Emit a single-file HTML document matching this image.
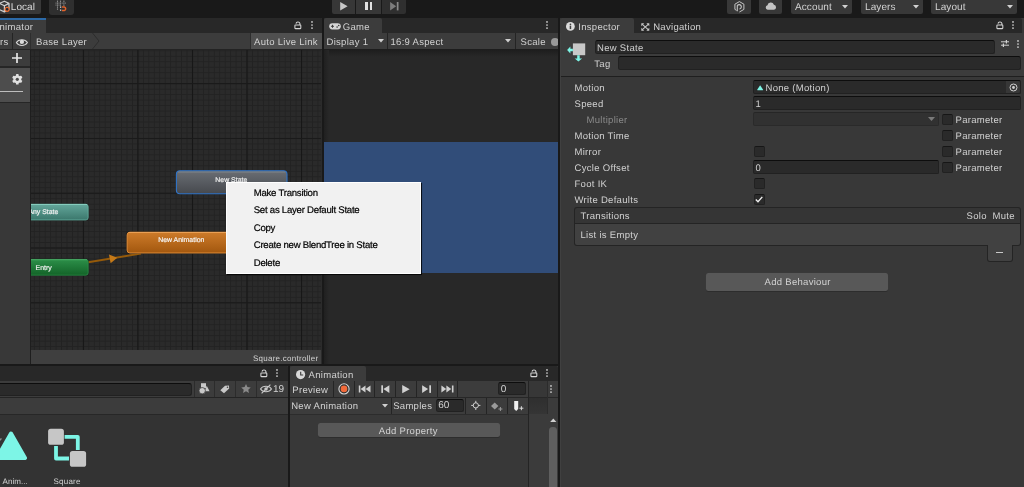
<!DOCTYPE html>
<html lang="en">
<head>
<meta charset="utf-8">
<title>Unity - Animator</title>
<style>
html,body{margin:0;padding:0;background:#191919;}
body{text-rendering:geometricPrecision;width:1024px;height:487px;overflow:hidden;position:relative;font-family:"Liberation Sans",sans-serif;font-size:10px;color:#d0d0d0;}
#root{position:absolute;left:0;top:0;width:1024px;height:487px;overflow:hidden;background:#191919;-webkit-font-smoothing:antialiased;will-change:transform;}

.a{position:absolute;}
.t{position:absolute;white-space:nowrap;line-height:12px;height:12px;font-size:9.5px;color:#d2d2d2;letter-spacing:0.3px;margin-top:1px;}
.tb{position:absolute;top:0;height:14px;background:#383838;border-radius:0 0 2px 2px;}
.tabrow{position:absolute;height:15px;background:#282828;border-radius:2px 2px 0 0;}
.tab{position:absolute;height:15px;background:#3c3c3c;border-radius:2px 2px 0 0;}
.bar{position:absolute;background:#3c3c3c;}
.sep{position:absolute;width:1px;background:#242424;}
.hsep{position:absolute;height:1px;background:#242424;}
.field{position:absolute;background:#2a2a2a;border:1px solid #212121;border-top-color:#0d0d0d;border-radius:2px;box-sizing:border-box;}
.chk{position:absolute;width:11px;height:11px;background:#2a2a2a;border:1px solid #212121;border-top-color:#161616;border-radius:2px;box-sizing:border-box;}
.btn{position:absolute;background:#585858;border-radius:2.5px;box-sizing:border-box;box-shadow:0 0.8px 0 #2a2a2a, 0 0 0 0.5px #3a3a3a;}
svg{position:absolute;overflow:visible;}
.mi{color:#000;font-size:9.6px;letter-spacing:-0.24px;margin-top:0;-webkit-text-stroke:0.2px #000;}
</style>
</head>
<body>
<div id="root">

<!-- ===== TOP TOOLBAR ===== -->
<div id="topbar" class="a" style="left:0;top:0;width:1024px;height:18px;background:#191919;">
  <div class="tb" style="left:0;width:41px;border-radius:0 0 2px 0;"></div>
  <svg style="left:0;top:0;" width="11" height="13" viewBox="0 0 11 13">
    <path d="M-0.5 3.4 L4.4 1.2 L9 3.4 L9 9.4 L4.4 11.9 L-0.5 9.6 M-0.5 3.4 L4.4 5.7 L9 3.4 M4.4 5.7 V11.9" fill="none" stroke="#cfcfcf" stroke-width="1.25" stroke-linejoin="round"/>
    <circle cx="7.1" cy="9.3" r="2" fill="#1f2a36" stroke="#ea6a2c" stroke-width="1.2"/>
  </svg>
  <div class="t" style="left:10.8px;top:1px;font-size:10px;letter-spacing:0.05px;color:#dcdcdc;">Local</div>
  <div class="tb" style="left:49px;width:24.5px;height:14.5px;background:#2f2f2f;border-radius:0 0 3px 3px;"></div>
  <svg style="left:55px;top:0;" width="14" height="12" viewBox="0 0 14 12">
    <rect x="1.95" y="0.65" width="1.1" height="1.1" fill="#a6a6a6"/><rect x="1.95" y="2.55" width="1.1" height="1.1" fill="#a6a6a6"/><rect x="1.95" y="4.55" width="1.1" height="1.1" fill="#a6a6a6"/><rect x="1.95" y="6.55" width="1.1" height="1.1" fill="#a6a6a6"/><rect x="1.95" y="8.55" width="1.1" height="1.1" fill="#a6a6a6"/><rect x="4.95" y="0.65" width="1.1" height="1.1" fill="#a6a6a6"/><rect x="4.95" y="2.55" width="1.1" height="1.1" fill="#a6a6a6"/><rect x="4.95" y="4.55" width="1.1" height="1.1" fill="#a6a6a6"/><rect x="8.35" y="0.65" width="1.1" height="1.1" fill="#a6a6a6"/><rect x="8.35" y="2.55" width="1.1" height="1.1" fill="#a6a6a6"/><rect x="8.35" y="4.55" width="1.1" height="1.1" fill="#a6a6a6"/><rect x="0.50" y="2.60" width="1" height="1" fill="#8e8e8e"/><rect x="3.50" y="2.60" width="1" height="1" fill="#8e8e8e"/><rect x="6.70" y="2.60" width="1" height="1" fill="#8e8e8e"/><rect x="9.90" y="2.60" width="1" height="1" fill="#8e8e8e"/><rect x="0.50" y="4.60" width="1" height="1" fill="#8e8e8e"/><rect x="3.50" y="4.60" width="1" height="1" fill="#8e8e8e"/>
    <path d="M5.6 6.6V7.8M5.6 9.4V10.8" stroke="#e0e0e0" stroke-width="1.3" fill="none"/>
    <path d="M7 7H9.4A1.9 1.9 0 0 1 9.4 10.6H7" stroke="#e0622a" stroke-width="1.5" fill="none"/>
  </svg>
  <div class="tb" style="left:331.5px;width:23.5px;border-radius:0 0 0 2px;background:#373737;"></div>
  <svg style="left:339.5px;top:2px;" width="8" height="9" viewBox="0 0 8 9"><path d="M0.2 0 L7.6 4.2 L0.2 8.4Z" fill="#c8c8c8"/></svg>
  <div class="tb" style="left:356px;width:25px;border-radius:0;background:#373737;"></div>
  <div class="a" style="left:365.4px;top:2px;width:2.4px;height:8.3px;background:#e2e2e2;"></div>
  <div class="a" style="left:370.1px;top:2px;width:2.4px;height:8.3px;background:#e2e2e2;"></div>
  <div class="tb" style="left:382px;width:24px;border-radius:0 0 2px 0;background:#2f2f2f;"></div>
  <svg style="left:390px;top:2px;" width="9" height="9" viewBox="0 0 9 9"><path d="M0.1 0 L6.2 4.2 L0.1 8.4Z" fill="#7d7d7d"/><rect x="6.8" y="0" width="1.7" height="8.4" fill="#8a8a8a"/></svg>
  <div class="tb" style="left:727px;width:23.5px;"></div>
  <svg style="left:733.5px;top:0.5px;" width="11" height="12" viewBox="0 0 11 12">
    <path d="M5.4 0.6 L9.9 3.2 V8.4 L5.4 11 M5.4 0.6 L0.9 3.2 V8.4 L2.6 9.4" fill="none" stroke="#c4c4c4" stroke-width="1"/>
    <path d="M3.3 10.2 V4.6 A2.2 2.2 0 1 1 5.4 8" fill="none" stroke="#c4c4c4" stroke-width="1.1"/>
  </svg>
  <div class="tb" style="left:759px;width:23.3px;"></div>
  <svg style="left:765px;top:2px;" width="12" height="8" viewBox="0 0 12 8">
    <path d="M2.6 7.8 A2.3 2.3 0 0 1 2.5 3.3 A3.3 3.3 0 0 1 8.9 2.7 A2.6 2.6 0 0 1 9 7.8 Z" fill="#c4c4c4"/>
  </svg>
  <div class="tb" style="left:791px;width:61px;"></div>
  <div class="t" style="left:795px;top:1px;font-size:10px;letter-spacing:0.1px;">Account</div>
  <svg style="left:842px;top:5px;" width="6" height="4" viewBox="0 0 6 4"><path d="M0 0H6L3 3.6Z" fill="#d0d0d0"/></svg>
  <div class="tb" style="left:861px;width:62px;"></div>
  <div class="t" style="left:865px;top:1px;font-size:10px;letter-spacing:0.1px;">Layers</div>
  <svg style="left:912.5px;top:5px;" width="6" height="4" viewBox="0 0 6 4"><path d="M0 0H6L3 3.6Z" fill="#d0d0d0"/></svg>
  <div class="tb" style="left:931px;width:86px;"></div>
  <div class="t" style="left:935px;top:1px;font-size:10px;letter-spacing:0.1px;">Layout</div>
  <svg style="left:1006.5px;top:5px;" width="6" height="4" viewBox="0 0 6 4"><path d="M0 0H6L3 3.6Z" fill="#d0d0d0"/></svg>
</div>

<!-- ===== ANIMATOR PANEL ===== -->
<div id="animator" class="a" style="left:0;top:18px;width:321.8px;height:346px;background:#2b2b2b;overflow:hidden;">
  <div class="tabrow" style="left:0;top:0;width:321.8px;border-radius:0 2px 0 0;"></div>
  <div class="tab" style="left:0;top:0;width:46px;border-radius:0;"></div>
  <div class="a" style="left:0;top:0;width:46px;height:2px;background:#2c6aa8;"></div>
  <div class="t" style="left:-0.5px;top:2.5px;">nimator</div>
  <svg style="left:294.3px;top:3.3px;" width="8" height="8" viewBox="0 0 8 8"><rect x="0.9" y="3.9" width="5.9" height="3.7" rx="0.5" fill="none" stroke="#d6d6d6" stroke-width="1.05"/><path d="M2 2.6 A2 2 0 0 1 5.9 2.4 V3.9" fill="none" stroke="#d6d6d6" stroke-width="1.05"/></svg>
  <svg style="left:310.6px;top:3.2px;" width="2" height="8" viewBox="0 0 2 8"><circle cx="1" cy="0.9" r="0.85" fill="#d8d8d8"/><circle cx="1" cy="4" r="0.85" fill="#d8d8d8"/><circle cx="1" cy="7.1" r="0.85" fill="#d8d8d8"/></svg>
  <div class="bar" style="left:0;top:15px;width:321.8px;height:16px;"></div>
  <div class="a" style="left:0;top:31px;width:321.8px;height:1px;background:#232323;"></div>
  <div class="t" style="left:0px;top:18px;">rs</div>
  <div class="sep" style="left:12px;top:15px;height:16px;"></div>
  <svg style="left:15.6px;top:20.6px;" width="11.8" height="7.1" viewBox="0 0 12 7.2">
    <path d="M0.4 3.6 C2.6 -0.3 9.4 -0.3 11.6 3.6 C9.4 7.5 2.6 7.5 0.4 3.6 Z" fill="none" stroke="#d6d6d6" stroke-width="1.1"/>
    <circle cx="6" cy="3" r="2.2" fill="#dcdcdc"/>
  </svg>
  <div class="sep" style="left:30px;top:15px;height:16px;background:#2e2e2e;"></div>
  <div class="t" style="left:36px;top:18px;">Base Layer</div>
  <svg style="left:92px;top:15px;" width="8" height="16" viewBox="0 0 8 16"><path d="M0.5 0 L7 8 L0.5 16" fill="none" stroke="#2c2c2c" stroke-width="1"/></svg>
  <div class="a" style="left:250px;top:15px;width:71.8px;height:16px;background:#505050;"></div>
  <div class="sep" style="left:249.5px;top:15px;height:16px;background:#2e2e2e;"></div>
  <div class="t" style="left:254px;top:18px;">Auto Live Link</div>

  <!-- graph grid -->
  <svg class="a" style="left:31px;top:32px;" width="290" height="300" viewBox="31 50 290 300">
    <defs>
      <pattern id="gmin" x="82.9" y="83.2" width="5.455" height="5.478" patternUnits="userSpaceOnUse">
        <rect x="0" y="0" width="5.455" height="5.478" fill="#2a2a2a"/>
        <rect x="0" y="0" width="1" height="5.478" fill="#222222"/>
        <rect x="0" y="0" width="5.455" height="1" fill="#222222"/>
      </pattern>
      <pattern id="gmaj" x="82.85" y="83.15" width="54.55" height="54.78" patternUnits="userSpaceOnUse">
        <rect x="0" y="0" width="1.1" height="54.78" fill="#161616"/>
        <rect x="0" y="0" width="54.55" height="1.1" fill="#191919"/>
      </pattern>
      <linearGradient id="gGrey" x1="0" y1="0" x2="0" y2="1"><stop offset="0" stop-color="#6a6e74"/><stop offset="1" stop-color="#46494e"/></linearGradient>
      <linearGradient id="gOrange" x1="0" y1="0" x2="0" y2="1"><stop offset="0" stop-color="#cd7b2a"/><stop offset="1" stop-color="#a2570e"/></linearGradient>
      <linearGradient id="gTeal" x1="0" y1="0" x2="0" y2="1"><stop offset="0" stop-color="#63a79b"/><stop offset="1" stop-color="#3b776c"/></linearGradient>
      <linearGradient id="gGreen" x1="0" y1="0" x2="0" y2="1"><stop offset="0" stop-color="#2c8f49"/><stop offset="1" stop-color="#136328"/></linearGradient>
    </defs>
    <rect x="31" y="50" width="290" height="300" fill="url(#gmin)"/>
    <rect x="31" y="50" width="290" height="300" fill="url(#gmaj)"/>
    <!-- transition arrow -->
    <line x1="88.2" y1="262.3" x2="141" y2="253.5" stroke="#955a0a" stroke-width="1.9"/>
    <polygon points="117.3,257.7 109,254.4 110.6,263.2" fill="#c67a18"/>
    <!-- Any State -->
    <rect x="19.5" y="203.4" width="69.4" height="17.4" rx="3" fill="#151515" opacity="0.55"/>
    <rect x="20" y="204.2" width="68.2" height="15.8" rx="2.4" fill="url(#gTeal)" stroke="#6dbdae" stroke-width="0.7"/>
    <rect x="21" y="204.1" width="66" height="0.9" fill="#8ed6c8" opacity="0.9"/>
    <text x="28.4" y="214.2" font-family="Liberation Sans, sans-serif" font-size="6.9" letter-spacing="0" stroke="#f2f2f2" stroke-width="0.18" fill="#f2f2f2">Any State</text>
    <!-- Entry -->
    <rect x="19.5" y="258.6" width="69.4" height="17.4" rx="3" fill="#151515" opacity="0.55"/>
    <rect x="20" y="259.4" width="68.2" height="15.8" rx="2.4" fill="url(#gGreen)" stroke="#2f9a4e" stroke-width="0.7"/>
    <rect x="21" y="259.3" width="66" height="0.9" fill="#55bb72" opacity="0.85"/>
    <text x="35.6" y="269.6" font-family="Liberation Sans, sans-serif" font-size="6.9" letter-spacing="0" stroke="#f2f2f2" stroke-width="0.18" fill="#f2f2f2">Entry</text>
    <!-- New Animation -->
    <rect x="126.2" y="231.2" width="112.6" height="22.8" rx="3.6" fill="#151515" opacity="0.6"/>
    <rect x="127.1" y="232.2" width="110.8" height="20.8" rx="2.8" fill="url(#gOrange)" stroke="#e8933c" stroke-width="0.9"/>
    <rect x="128.5" y="232" width="108" height="0.9" fill="#f7ae62" opacity="0.8"/>
    <text x="181.3" y="242.3" text-anchor="middle" font-family="Liberation Sans, sans-serif" font-size="6.9" letter-spacing="0.02" stroke="#f6f6f6" stroke-width="0.18" fill="#f6f6f6">New Animation</text>
    <!-- New State (selected) -->
    <rect x="176.4" y="170.7" width="110.6" height="23" rx="3.5" fill="url(#gGrey)" stroke="#2f74c9" stroke-width="1.1"/>
    <rect x="178" y="171.6" width="107.5" height="0.9" fill="#8d9197" opacity="0.7"/>
    <text x="231.3" y="181.7" text-anchor="middle" font-family="Liberation Sans, sans-serif" font-size="6.9" letter-spacing="0.02" stroke="#f0f0f0" stroke-width="0.18" fill="#f0f0f0">New State</text>
  </svg>
  <!-- footer -->
  <div class="a" style="left:31px;top:332px;width:290px;height:14px;background:#3f3f3f;"></div>
  <div class="t" style="right:3.4px;top:333.8px;font-size:8px;letter-spacing:0.27px;">Square.controller</div>

  <!-- left layers panel -->
  <div class="a" style="left:0;top:32px;width:30px;height:314px;background:#383838;"></div>
  <div class="a" style="left:30px;top:32px;width:1px;height:314px;background:#1e1e1e;"></div>
  <div class="a" style="left:0;top:32px;width:30px;height:16px;background:#3c3c3c;"></div>
  <div class="a" style="left:0;top:48px;width:30px;height:2px;background:#262626;"></div>
  <div class="a" style="left:0;top:50px;width:30px;height:34px;background:#4d4d4d;"></div>
  <div class="a" style="left:0;top:84px;width:30px;height:1px;background:#262626;"></div>
  <div class="a" style="left:0;top:72.5px;width:23px;height:1px;background:#bdbdbd;"></div>
  <svg style="left:11.8px;top:35.1px;" width="10" height="10" viewBox="0 0 10 10"><path d="M5 0V10M0 5H10" stroke="#e6e6e6" stroke-width="1.7" fill="none"/></svg>
  <svg style="left:11.5px;top:56.3px;" width="10.6" height="10.6" viewBox="-5.3 -5.3 10.6 10.6">
    <g fill="#e0e0e0">
      <rect x="-1.35" y="-5.2" width="2.7" height="10.4" rx="0.6"/>
      <rect x="-1.35" y="-5.2" width="2.7" height="10.4" rx="0.6" transform="rotate(60)"/>
      <rect x="-1.35" y="-5.2" width="2.7" height="10.4" rx="0.6" transform="rotate(120)"/>
      <circle r="3.9"/>
    </g>
    <circle r="1.6" fill="#4d4d4d"/>
  </svg>
</div>

<!-- ===== GAME PANEL ===== -->
<div id="game" class="a" style="left:323.5px;top:18px;width:234.6px;height:346px;background:#282828;overflow:hidden;">
  <div class="tabrow" style="left:0;top:0;width:234.3px;"></div>
  <div class="tab" style="left:0;top:0;width:58.8px;"></div>
  <svg style="left:5px;top:5px;" width="12" height="7" viewBox="0 0 12 7">
    <rect x="0.2" y="0.2" width="11.6" height="6.2" rx="3.1" fill="#d4d4d4"/>
    <path d="M2 3.3H5M3.5 1.8V4.8" stroke="#3c3c3c" stroke-width="1"/>
    <circle cx="8.1" cy="4.1" r="0.8" fill="#3c3c3c"/><circle cx="9.7" cy="2.5" r="0.8" fill="#3c3c3c"/>
  </svg>
  <div class="t" style="left:19.3px;top:2.5px;">Game</div>
  <svg style="left:222.7px;top:3.2px;" width="2" height="8" viewBox="0 0 2 8"><circle cx="1" cy="0.9" r="0.85" fill="#d8d8d8"/><circle cx="1" cy="4" r="0.85" fill="#d8d8d8"/><circle cx="1" cy="7.1" r="0.85" fill="#d8d8d8"/></svg>
  <div class="bar" style="left:0;top:15px;width:234.3px;height:16px;"></div>
  <div class="t" style="left:3px;top:18px;">Display 1</div>
  <svg style="left:54.2px;top:21.4px;" width="6" height="4" viewBox="0 0 6 4"><path d="M0 0H6L3 3.6Z" fill="#d0d0d0"/></svg>
  <div class="sep" style="left:63px;top:15px;height:16px;"></div>
  <div class="t" style="left:67px;top:18px;">16:9 Aspect</div>
  <svg style="left:181.8px;top:21.4px;" width="6" height="4" viewBox="0 0 6 4"><path d="M0 0H6L3 3.6Z" fill="#d0d0d0"/></svg>
  <div class="sep" style="left:191.3px;top:15px;height:16px;"></div>
  <div class="t" style="left:197px;top:18px;">Scale</div>
  <div class="a" style="left:227px;top:19.8px;width:8.6px;height:8.6px;border-radius:50%;background:#999999;"></div>
  <div class="a" style="left:0;top:31px;width:234.3px;height:8px;background:linear-gradient(#1c1c1c,#282828);"></div>
  <div class="a" style="left:0;top:32px;width:5px;height:314px;background:linear-gradient(to right,#202020,#282828);"></div>
  <div class="a" style="left:0;top:123.5px;width:234.6px;height:131.2px;background:#314d79;"></div>
</div>

<!-- ===== PROJECT PANEL ===== -->
<div id="project" class="a" style="left:0;top:366px;width:288px;height:121px;background:#333333;overflow:hidden;">
  <div class="tabrow" style="left:0;top:0;width:288px;border-radius:0 2px 0 0;"></div>
  <svg style="left:259.7px;top:3px;" width="8" height="8" viewBox="0 0 8 8"><rect x="0.9" y="3.9" width="5.9" height="3.7" rx="0.5" fill="none" stroke="#d6d6d6" stroke-width="1.05"/><path d="M2 2.6 A2 2 0 0 1 5.9 2.4 V3.9" fill="none" stroke="#d6d6d6" stroke-width="1.05"/></svg>
  <svg style="left:276.1px;top:3.2px;" width="2" height="8" viewBox="0 0 2 8"><circle cx="1" cy="0.9" r="0.85" fill="#d8d8d8"/><circle cx="1" cy="4" r="0.85" fill="#d8d8d8"/><circle cx="1" cy="7.1" r="0.85" fill="#d8d8d8"/></svg>
  <div class="bar" style="left:0;top:14.6px;width:288px;height:16.6px;"></div>
  <div class="field" style="left:-3px;top:17.2px;width:195px;height:12.6px;border-radius:3px;"></div>
  <div class="sep" style="left:194px;top:14.6px;height:16.6px;background:#2c2c2c;"></div>
  <div class="sep" style="left:214px;top:14.6px;height:16.6px;background:#2c2c2c;"></div>
  <div class="sep" style="left:235px;top:14.6px;height:16.6px;background:#2c2c2c;"></div>
  <div class="sep" style="left:256px;top:14.6px;height:16.6px;background:#2c2c2c;"></div>
  <!-- filter by type -->
  <svg style="left:198.5px;top:17px;" width="11" height="11" viewBox="0 0 11 11">
    <rect x="2" y="0.2" width="5" height="4.8" fill="#c8c8c8"/>
    <path d="M7.7 2.8 L10.6 8.3 H5.6 Z" fill="#c8c8c8"/>
    <circle cx="3.2" cy="7.7" r="3.2" fill="#c8c8c8" stroke="#3c3c3c" stroke-width="0.8"/>
  </svg>
  <!-- tag -->
  <svg style="left:219.5px;top:18.8px;" width="10" height="9" viewBox="0 0 10 9">
    <path d="M0.3 5.2 L5 0.8 L9 0.4 L9.2 3.6 L4 8.2 Z" fill="#c8c8c8"/>
    <circle cx="7.5" cy="2.2" r="0.8" fill="#3c3c3c"/>
  </svg>
  <!-- star -->
  <svg style="left:240.6px;top:18.4px;" width="10" height="9" viewBox="0 0 10 9.5">
    <path d="M5 0 L6.5 3.2 L10 3.6 L7.4 6 L8.1 9.5 L5 7.7 L1.9 9.5 L2.6 6 L0 3.6 L3.5 3.2 Z" fill="#8a8a8a"/>
  </svg>
  <!-- hidden eye -->
  <svg style="left:260px;top:17.8px;" width="12" height="10" viewBox="0 0 12 10">
    <path d="M0.5 5 C2.6 1.4 9.4 1.4 11.5 5 C9.4 8.6 2.6 8.6 0.5 5 Z" fill="none" stroke="#c8c8c8" stroke-width="1.1"/>
    <circle cx="6" cy="5" r="1.7" fill="#c8c8c8"/>
    <path d="M1.6 9.4 L10.4 0.6" stroke="#c8c8c8" stroke-width="1.1"/>
  </svg>
  <div class="t" style="left:273px;top:16.8px;font-size:10px;letter-spacing:0;">19</div>
  <div class="a" style="left:0;top:31.2px;width:288px;height:1px;background:#242424;"></div>
  <div class="bar" style="left:0;top:32.2px;width:288px;height:15.4px;"></div>
  <div class="a" style="left:0;top:47.6px;width:288px;height:1px;background:#272727;"></div>
  <!-- assets -->
  <svg style="left:0;top:60px;" width="90" height="45" viewBox="0 426 90 45">
    <path d="M11 433.5 L25 458 H-3 Z" fill="#7df5e6" stroke="#7df5e6" stroke-width="4" stroke-linejoin="round"/>
    <path d="M0 438.6 H2 L0.3 441 Z" fill="#9a9a9a"/>
    <path d="M63 436.8 H77.8 V450" fill="none" stroke="#7df5e6" stroke-width="3.8" stroke-linejoin="round"/>
    <path d="M56 446 V458.5 H69" fill="none" stroke="#7df5e6" stroke-width="3.8" stroke-linejoin="round"/>
    <rect x="47.4" y="428.1" width="17.2" height="17.4" rx="3.2" fill="#333333"/>
    <rect x="69.2" y="450.3" width="17.6" height="17.2" rx="3.2" fill="#333333"/>
    <rect x="48.1" y="428.8" width="15.8" height="16" rx="2.6" fill="#c6c6c6"/>
    <rect x="69.9" y="451" width="16.2" height="15.8" rx="2.6" fill="#c6c6c6"/>
  </svg>
  <div class="t" style="left:2.6px;top:109px;font-size:8px;letter-spacing:0.05px;">Anim...</div>
  <div class="t" style="left:53.4px;top:109px;font-size:8px;letter-spacing:0.25px;">Square</div>
</div>

<!-- ===== ANIMATION PANEL ===== -->
<div id="animation" class="a" style="left:289.6px;top:366px;width:268.4px;height:121px;background:#383838;overflow:hidden;">
  <div class="tabrow" style="left:0;top:0;width:268.4px;"></div>
  <div class="tab" style="left:0;top:0;width:76.3px;"></div>
  <svg style="left:6.2px;top:3.6px;" width="9.2" height="9.2" viewBox="0 0 9.2 9.2"><circle cx="4.6" cy="4.6" r="4.6" fill="#d8d8d8"/><path d="M4.7 1.8V5H7.2" fill="none" stroke="#3c3c3c" stroke-width="1.1"/></svg>
  <div class="t" style="left:19.0px;top:2.5px;">Animation</div>
  <svg style="left:240.1px;top:3px;" width="8" height="8" viewBox="0 0 8 8"><rect x="0.9" y="3.9" width="5.9" height="3.7" rx="0.5" fill="none" stroke="#d6d6d6" stroke-width="1.05"/><path d="M2 2.6 A2 2 0 0 1 5.9 2.4 V3.9" fill="none" stroke="#d6d6d6" stroke-width="1.05"/></svg>
  <svg style="left:256.9px;top:3.2px;" width="2" height="8" viewBox="0 0 2 8"><circle cx="1" cy="0.9" r="0.85" fill="#d8d8d8"/><circle cx="1" cy="4" r="0.85" fill="#d8d8d8"/><circle cx="1" cy="7.1" r="0.85" fill="#d8d8d8"/></svg>
  <div class="bar" style="left:0;top:14.6px;width:268.4px;height:16.4px;"></div>
  <div class="a" style="left:0;top:31px;width:268.4px;height:1px;background:#272727;"></div>
  <div class="bar" style="left:0;top:32px;width:268.4px;height:15.6px;"></div>
  <div class="a" style="left:0;top:47.6px;width:238.7px;height:1px;background:#2c2c2c;"></div>
  <!-- timeline column -->
  <div class="a" style="left:239.2px;top:14.6px;width:18.4px;height:16.4px;background:#373737;"></div>
  <div class="a" style="left:239.2px;top:32px;width:18.4px;height:15.6px;background:linear-gradient(#2f2f2f,#353535);"></div>
  <div class="a" style="left:239.2px;top:47.6px;width:29.2px;height:74px;background:#3b3b3b;"></div>
  <div class="a" style="left:257.6px;top:32px;width:11px;height:15.6px;background:#3b3b3b;"></div>
  <div class="a" style="left:259.8px;top:61px;width:7.3px;height:70px;border-radius:3.6px;background:#5f5f5f;"></div>
  <div class="t" style="left:2.7px;top:17.6px;">Preview</div>
  <div class="sep" style="left:43.2px;top:14.6px;height:16.4px;"></div>
  <div class="sep" style="left:64.2px;top:14.6px;height:16.4px;"></div>
  <div class="sep" style="left:84.8px;top:14.6px;height:16.4px;"></div>
  <div class="sep" style="left:105.5px;top:14.6px;height:16.4px;"></div>
  <div class="sep" style="left:126.4px;top:14.6px;height:16.4px;"></div>
  <div class="sep" style="left:147.1px;top:14.6px;height:16.4px;"></div>
  <div class="sep" style="left:167.6px;top:14.6px;height:16.4px;"></div>
  <div class="field" style="left:208.6px;top:16.3px;width:27.5px;height:12.6px;border-radius:2.5px;"></div>
  <div class="t" style="left:211.2px;top:16.5px;font-size:10px;letter-spacing:0;">0</div>
  <div class="sep" style="left:238.4px;top:14.6px;height:107px;"></div>
  <div class="sep" style="left:257.2px;top:14.6px;height:33px;background:#2c2c2c;"></div>
  <svg style="left:260.8px;top:19.1px;" width="2" height="8" viewBox="0 0 2 8"><circle cx="1" cy="0.9" r="0.85" fill="#d8d8d8"/><circle cx="1" cy="4" r="0.85" fill="#d8d8d8"/><circle cx="1" cy="7.1" r="0.85" fill="#d8d8d8"/></svg>
  <div class="t" style="left:1.6px;top:33.5px;">New Animation</div>
  <svg style="left:92.4px;top:38.3px;" width="6" height="4" viewBox="0 0 6 4"><path d="M0 0H6L3 3.6Z" fill="#d0d0d0"/></svg>
  <div class="sep" style="left:101.2px;top:32px;height:15.6px;"></div>
  <div class="t" style="left:103.6px;top:33.5px;">Samples</div>
  <div class="field" style="left:146.7px;top:33.3px;width:27.7px;height:12.4px;border-radius:2.5px;"></div>
  <div class="t" style="left:148.7px;top:33.3px;font-size:10px;letter-spacing:0;">60</div>
  <div class="sep" style="left:175.5px;top:32px;height:15.6px;"></div>
  <div class="sep" style="left:196.6px;top:32px;height:15.6px;"></div>
  <div class="sep" style="left:217.6px;top:32px;height:15.6px;"></div>
  <svg style="left:0;top:0;" width="268" height="50" viewBox="289.6 366 268 50">
    <!-- record -->
    <circle cx="343.6" cy="388.9" r="5.1" fill="#2e2e2e" stroke="#d4d4d4" stroke-width="1.1"/>
    <circle cx="343.6" cy="388.9" r="3.3" fill="#f26a3a"/>
    <!-- first key -->
    <rect x="358.4" y="385.5" width="1.6" height="7" fill="#d0d0d0"/><path d="M365.09999999999997 385.5 L360.2 389.0 L365.09999999999997 392.5Z" fill="#d0d0d0"/><path d="M370.09999999999997 385.5 L365.2 389.0 L370.09999999999997 392.5Z" fill="#d0d0d0"/>
    <!-- prev key -->
    <rect x="380.9" y="385.3" width="1.7" height="7.6" fill="#d0d0d0"/><path d="M389 385.3 L383 389.1 L389 392.90000000000003Z" fill="#d0d0d0"/>
    <!-- play -->
    <path d="M401.8 385.1 L409.3 389.15000000000003 L401.8 393.20000000000005Z" fill="#d0d0d0"/>
    <!-- next key -->
    <path d="M421.7 385.3 L427.7 389.1 L421.7 392.90000000000003Z" fill="#d0d0d0"/><rect x="428.9" y="385.3" width="1.7" height="7.6" fill="#d0d0d0"/>
    <!-- last key -->
    <path d="M441 385.5 L445.9 389.0 L441 392.5Z" fill="#d0d0d0"/><path d="M446 385.5 L450.9 389.0 L446 392.5Z" fill="#d0d0d0"/><rect x="451.5" y="385.5" width="1.6" height="7" fill="#d0d0d0"/>
    <!-- crosshair -->
    <circle cx="475.4" cy="405.4" r="2.6" fill="none" stroke="#d0d0d0" stroke-width="1"/>
    <path d="M475.4 400.8V403M475.4 407.8V410M470.8 405.4H473M477.8 405.4H480" stroke="#d0d0d0" stroke-width="1"/>
    <!-- diamond + -->
    <path d="M494.3 402.4 L498 406 L494.3 409.6 L490.6 406 Z" fill="#9a9a9a"/>
    <path d="M498 409H502M500 407V411" stroke="#9a9a9a" stroke-width="1"/>
    <!-- key + -->
    <path d="M513.8 400.9 H517.8 V409 L515.8 411 L513.8 409 Z" fill="#f0f0f0"/>
    <path d="M519 408.2H523M521 406.2V410.2" stroke="#d8d8d8" stroke-width="1"/>
    <!-- scroll up arrow -->
    <path d="M549.8 422 L552.9 418.4 L556 422 Z" fill="#d0d0d0"/>
  </svg>
  <div class="btn" style="left:28.6px;top:57.3px;width:182.2px;height:13.4px;"></div>
  <div class="t" style="left:89.2px;top:58.5px;">Add Property</div>
</div>

<!-- ===== INSPECTOR PANEL ===== -->
<div id="inspector" class="a" style="left:559.5px;top:18px;width:464.5px;height:469px;background:#383838;overflow:hidden;">
  <div class="tabrow" style="left:0;top:0;width:462.8px;"></div>
  <div class="tab" style="left:0;top:0;width:74.0px;"></div>
  <svg style="left:6.6px;top:3.8px;" width="8.8" height="8.8" viewBox="0 0 8.8 8.8"><circle cx="4.4" cy="4.4" r="4.4" fill="#dcdcdc"/><rect x="3.7" y="3.7" width="1.5" height="3.4" fill="#3c3c3c"/><circle cx="4.45" cy="2.3" r="0.85" fill="#3c3c3c"/></svg>
  <div class="t" style="left:18.8px;top:2.5px;">Inspector</div>
  <svg style="left:81.0px;top:4.9px;" width="8.6" height="8" viewBox="0 0 8.6 8">
    <path d="M0.3 0.3H3.2L0.3 3.2ZM8.3 0.3V3.2L5.4 0.3ZM0.3 7.7V4.8L3.2 7.7ZM8.3 7.7H5.4L8.3 4.8Z" fill="#c8c8c8"/>
    <path d="M1.4 1.4L7.2 6.6M7.2 1.4L1.4 6.6" stroke="#c8c8c8" stroke-width="1.1"/>
  </svg>
  <div class="t" style="left:93.7px;top:2.5px;">Navigation</div>
  <svg style="left:436.1px;top:3.3px;" width="8" height="8" viewBox="0 0 8 8"><rect x="0.9" y="3.9" width="5.9" height="3.7" rx="0.5" fill="none" stroke="#d6d6d6" stroke-width="1.05"/><path d="M2 2.6 A2 2 0 0 1 5.9 2.4 V3.9" fill="none" stroke="#d6d6d6" stroke-width="1.05"/></svg>
  <svg style="left:452.3px;top:3.2px;" width="2" height="8" viewBox="0 0 2 8"><circle cx="1" cy="0.9" r="0.85" fill="#d8d8d8"/><circle cx="1" cy="4" r="0.85" fill="#d8d8d8"/><circle cx="1" cy="7.1" r="0.85" fill="#d8d8d8"/></svg>
  <div class="bar" style="left:0;top:15px;width:464.5px;height:42.8px;"></div>
  <div class="hsep" style="left:0;top:57.8px;width:464.5px;background:#1f1f1f;"></div>
  <div class="a" style="left:0;top:15px;width:1px;height:454px;background:#404040;"></div>
  <!-- state icon -->
  <svg style="left:7.5px;top:24.5px;" width="19" height="19" viewBox="567 42.5 19 19">
    <rect x="572.9" y="42.9" width="12.3" height="11.8" fill="#c8c8c8"/>
    <path d="M567.1 49.5 L570.4 46.1 V48.2 H572.9 V50.8 H570.4 V52.9 Z" fill="#7df5e6"/>
    <path d="M578.4 61 L574.7 58 H577.2 V54.7 H579.7 V58 H582.1 Z" fill="#7df5e6"/>
  </svg>
  <div class="field" style="left:35.0px;top:21.6px;width:400.5px;height:14px;border-radius:2.5px;"></div>
  <div class="t" style="left:37.5px;top:23.8px;">New State</div>
  <svg style="left:441.5px;top:22.4px;" width="8" height="7" viewBox="0 0 8 7">
    <path d="M0 1.8H8M0 5.2H8" stroke="#d0d0d0" stroke-width="1"/>
    <path d="M5.4 0V3.6M2.4 3.4V7" stroke="#d0d0d0" stroke-width="1.2"/>
  </svg>
  <svg style="left:457.1px;top:22.1px;" width="2" height="8" viewBox="0 0 2 8"><circle cx="1" cy="0.9" r="0.85" fill="#d8d8d8"/><circle cx="1" cy="4" r="0.85" fill="#d8d8d8"/><circle cx="1" cy="7.1" r="0.85" fill="#d8d8d8"/></svg>
  <div class="t" style="left:34.8px;top:39.8px;">Tag</div>
  <div class="field" style="left:58.5px;top:37.8px;width:402.70000000000005px;height:14px;border-radius:2.5px;"></div>

  <div class="t" style="left:15px;top:63.5px;">Motion</div>
  <div class="t" style="left:15px;top:79.5px;">Speed</div>
  <div class="t" style="left:27px;top:95.5px;color:#8a8a8a;">Multiplier</div>
  <div class="t" style="left:15px;top:111.5px;">Motion Time</div>
  <div class="t" style="left:15px;top:127.5px;">Mirror</div>
  <div class="t" style="left:15px;top:143.5px;">Cycle Offset</div>
  <div class="t" style="left:15px;top:159.5px;">Foot IK</div>
  <div class="t" style="left:15px;top:175.5px;">Write Defaults</div>
  <!-- Motion object field -->
  <div class="field" style="left:193.5px;top:62px;width:267.5px;height:14.4px;"></div>
  <div class="a" style="left:446px;top:63px;width:14px;height:12.4px;background:#373737;border-radius:0 2px 2px 0;"></div>
  <svg style="left:197.9px;top:66.7px;" width="6.3" height="5.4" viewBox="0 0 7 6"><path d="M3.5 0.3 L6.8 5.4 Q6.9 5.8 6.4 5.8 L0.6 5.8 Q0.1 5.8 0.2 5.4 Z" fill="#7df5e6"/></svg>
  <div class="t" style="left:206px;top:63.5px;">None (Motion)</div>
  <svg style="left:449px;top:64.5px;" width="9" height="9" viewBox="0 0 9 9"><circle cx="4.5" cy="4.5" r="3.5" fill="none" stroke="#d0d0d0" stroke-width="1"/><circle cx="4.5" cy="4.5" r="1.4" fill="#d0d0d0"/></svg>
  <!-- Speed -->
  <div class="field" style="left:193.5px;top:78px;width:267.5px;height:14.4px;"></div>
  <div class="t" style="left:196px;top:79.5px;">1</div>
  <!-- Multiplier dropdown (disabled) -->
  <div class="field" style="left:193.5px;top:94px;width:185.5px;height:14.4px;background:#313131;border-color:#2a2a2a;border-top-color:#262626;"></div>
  <svg style="left:368.5px;top:99px;" width="7" height="4" viewBox="0 0 7 4"><path d="M0 0H7L3.5 4Z" fill="#7a7a7a"/></svg>
  <div class="chk" style="left:382px;top:95.5px;"></div>
  <div class="t" style="left:396px;top:95.5px;">Parameter</div>
  <!-- Motion Time -->
  <div class="chk" style="left:382px;top:111.5px;"></div>
  <div class="t" style="left:396px;top:111.5px;">Parameter</div>
  <!-- Mirror -->
  <div class="chk" style="left:194px;top:127.5px;"></div>
  <div class="chk" style="left:382px;top:127.5px;"></div>
  <div class="t" style="left:396px;top:127.5px;">Parameter</div>
  <!-- Cycle Offset -->
  <div class="field" style="left:193.5px;top:142px;width:185.5px;height:14.4px;"></div>
  <div class="t" style="left:196px;top:143.5px;">0</div>
  <div class="chk" style="left:382px;top:143.5px;"></div>
  <div class="t" style="left:396px;top:143.5px;">Parameter</div>
  <!-- Foot IK -->
  <div class="chk" style="left:194px;top:159.5px;"></div>
  <!-- Write Defaults -->
  <div class="chk" style="left:194px;top:175.5px;"></div>
  <svg style="left:195.5px;top:177.5px;" width="8" height="7" viewBox="0 0 8 7"><path d="M0.8 3.6 L3 5.8 L7.3 0.9" fill="none" stroke="#f0f0f0" stroke-width="1.4"/></svg>
  <!-- Transitions list -->
  <div class="a" style="left:14.5px;top:189px;width:447px;height:38.5px;background:#242424;border-radius:3px;"></div>
  <div class="a" style="left:15.5px;top:190px;width:445px;height:14.5px;background:#353535;border-radius:2px 2px 0 0;"></div>
  <div class="a" style="left:15.5px;top:205.5px;width:445px;height:21px;background:#414141;border-radius:0 0 2px 2px;"></div>
  <div class="t" style="left:21px;top:191.5px;">Transitions</div>
  <div class="t" style="left:407px;top:191.5px;">Solo</div>
  <div class="t" style="left:433px;top:191.5px;">Mute</div>
  <div class="t" style="left:21px;top:211px;">List is Empty</div>
  <div class="a" style="left:427px;top:226.5px;width:26.5px;height:17px;background:#242424;border-radius:0 0 3px 3px;"></div>
  <div class="a" style="left:428px;top:226.5px;width:24.5px;height:16px;background:#414141;border-radius:0 0 2px 2px;"></div>
  <div class="a" style="left:436.5px;top:234px;width:7px;height:1px;background:#c8c8c8;"></div>
  <!-- Add Behaviour -->
  <div class="btn" style="left:146.5px;top:255.4px;width:181.8px;height:17.4px;"></div>
  <div class="t" style="left:205px;top:257.9px;">Add Behaviour</div>
</div>

<!-- ===== CONTEXT MENU ===== -->
<div id="ctxmenu" class="a" style="left:225.7px;top:181.8px;width:195.2px;height:92.1px;background:#f1f1f1;box-shadow:inset 0 0 0 0.9px #ffffff, 0.9px 0.9px 0.6px rgba(0,0,0,0.8);font-family:'Liberation Sans',sans-serif;">
  <div class="t mi" style="left:28px;top:6px;">Make Transition</div>
  <div class="t mi" style="left:28px;top:23.5px;">Set as Layer Default State</div>
  <div class="t mi" style="left:28px;top:41px;">Copy</div>
  <div class="t mi" style="left:28px;top:58.5px;">Create new BlendTree in State</div>
  <div class="t mi" style="left:28px;top:76px;">Delete</div>
</div>

</div>
</body>
</html>
